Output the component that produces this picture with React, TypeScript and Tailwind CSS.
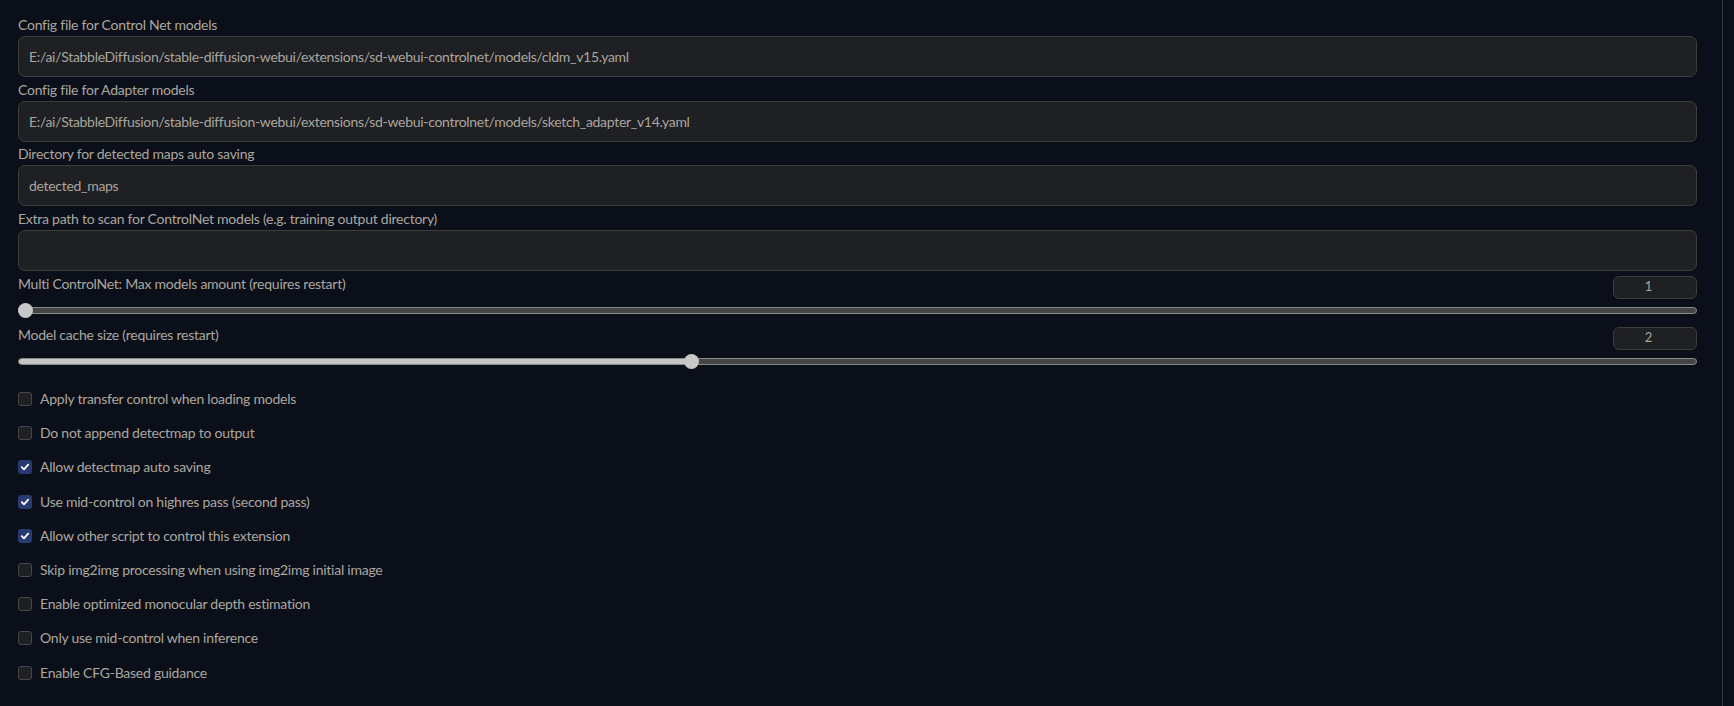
import React from "react";

const font = { fontFamily: '"Lato", "Liberation Sans", sans-serif' };

function TextField({ label, value }: { label: string; value: string }) {
  return (
    <div className="flex flex-col">
      <div className="h-[20px] mb-[1px] text-[14px] leading-[20px] tracking-[-0.25px] text-[#aba79f]">{label}</div>
      <div className="h-[41px] rounded-[7px] border border-[#3f3d3a] bg-[#1f2023] px-[10px] flex items-center text-[14px] tracking-[-0.3px] text-[#a9a59e]">
        {value}
      </div>
    </div>
  );
}

function SliderField({ label, value, frac, mt }: { label: string; value: string; frac: number; mt: string }) {
  return (
    <div className={`flex flex-col ${mt}`}>
      <div className="flex justify-between items-start h-[25px]">
        <div className="text-[14px] leading-[20px] tracking-[-0.25px] text-[#aba79f]">{label}</div>
        <div className="mt-[2px] h-[23px] w-[84px] rounded-[6px] border border-[#3f3d3a] bg-[#1f2023] flex items-center justify-center pr-[13px] text-[13px] text-[#a9a59e]">
          {value}
        </div>
      </div>
      <div className="relative mt-[4px] h-[15px] flex items-center">
        <div className="w-full h-[7px] rounded-full border border-[#8a8a8a] bg-[#454545] overflow-hidden">
          <div className="h-full bg-[#c6c6c6]" style={{ width: `${frac * 100}%` }} />
        </div>
        <div
          className="absolute top-0 h-[15px] w-[15px] rounded-full bg-[#c8c8c8]"
          style={{ left: `calc(${frac} * (100% - 15px))` }}
        />
      </div>
    </div>
  );
}

function Check({ label, checked }: { label: string; checked?: boolean }) {
  return (
    <div className="flex items-center h-[20px]">
      {checked ? (
        <div className="w-[14px] h-[14px] rounded-[3px] bg-[#273a72] flex items-center justify-center">
          <svg width="10" height="10" viewBox="0 0 10 10">
            <path d="M1.8 5.2 L4 7.3 L8.2 2.6" fill="none" stroke="#ffffff" strokeWidth="1.8" strokeLinecap="round" strokeLinejoin="round" />
          </svg>
        </div>
      ) : (
        <div className="w-[14px] h-[14px] rounded-[3px] border border-[#4a4846] bg-[#1f2023]" />
      )}
      <span className="ml-[8px] text-[14px] leading-[20px] tracking-[-0.25px] text-[#aba79f]">{label}</span>
    </div>
  );
}

export default function App() {
  return (
    <div className="flex w-[1734px] min-h-[706px] bg-[#0b0f19]" style={font}>
      <div className="w-[1723px] shrink-0 border-r border-[#2f3645] pl-[18px] pr-[25px] pt-[15px] flex flex-col">
        <div className="flex flex-col gap-[2.5px]">
          <TextField
            label="Config file for Control Net models"
            value="E:/ai/StabbleDiffusion/stable-diffusion-webui/extensions/sd-webui-controlnet/models/cldm_v15.yaml"
          />
          <TextField
            label="Config file for Adapter models"
            value="E:/ai/StabbleDiffusion/stable-diffusion-webui/extensions/sd-webui-controlnet/models/sketch_adapter_v14.yaml"
          />
          <TextField label="Directory for detected maps auto saving" value="detected_maps" />
          <TextField label="Extra path to scan for ControlNet models (e.g. training output directory)" value="" />
        </div>
        <SliderField label="Multi ControlNet: Max models amount (requires restart)" value="1" frac={0} mt="mt-[3px]" />
        <SliderField label="Model cache size (requires restart)" value="2" frac={0.4} mt="mt-[7px]" />
        <div className="mt-[20.5px] flex flex-col gap-[14.2px]">
          <Check label="Apply transfer control when loading models" />
          <Check label="Do not append detectmap to output" />
          <Check label="Allow detectmap auto saving" checked />
          <Check label="Use mid-control on highres pass (second pass)" checked />
          <Check label="Allow other script to control this extension" checked />
          <Check label="Skip img2img processing when using img2img initial image" />
          <Check label="Enable optimized monocular depth estimation" />
          <Check label="Only use mid-control when inference" />
          <Check label="Enable CFG-Based guidance" />
        </div>
      </div>
      <div className="flex-1" />
    </div>
  );
}
